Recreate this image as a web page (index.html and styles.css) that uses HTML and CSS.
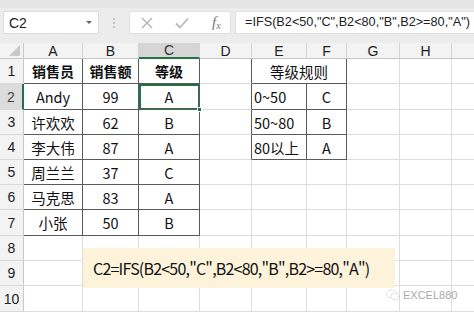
FILE: index.html
```html
<!DOCTYPE html>
<html lang="zh">
<head>
<meta charset="utf-8">
<title>IFS</title>
<link rel="stylesheet" href="styles.css">
</head>
<body>
<div class="app">
  <div class="toolbar">
    <div class="namebox"><span class="nb-text">C2</span><span class="caret"></span></div>
    <div class="grip"><i></i><i></i><i></i></div>
    <div class="fxbox">
      <svg class="ico" width="14" height="14" viewBox="0 0 14 14"><path d="M2 2 L12 12 M12 2 L2 12" stroke="#b9b9b9" stroke-width="1.6" fill="none"/></svg>
      <svg class="ico" width="16" height="14" viewBox="0 0 16 14"><path d="M2 7.5 L6 11.5 L14 2.5" stroke="#b9b9b9" stroke-width="1.8" fill="none"/></svg>
      <span class="fx">f<sub>x</sub></span>
    </div>
    <div class="formula">=IFS(B2&lt;50,"C",B2&lt;80,"B",B2&gt;=80,"A")</div>
  </div>

  <div class="sheet">
    <div class="corner"><span class="tri"></span></div>
    <div class="ch">A</div><div class="ch">B</div><div class="ch sel">C</div><div class="ch">D</div><div class="ch">E</div><div class="ch">F</div><div class="ch">G</div><div class="ch">H</div><div class="ch last"></div>

    <div class="rh">1</div>
    <div class="c dr db b">销售员</div><div class="c dr db b">销售额</div><div class="c dr db b">等级</div><div class="c dr"></div><div class="c dr db span2">等级规则</div><div class="c"></div><div class="c"></div><div class="c last"></div>

    <div class="rh sel">2</div>
    <div class="c dr db">Andy</div><div class="c dr db">99</div><div class="c dr db active">A<span class="handle"></span></div><div class="c dr"></div><div class="c dr db left">0~50</div><div class="c dr db">C</div><div class="c"></div><div class="c"></div><div class="c last"></div>

    <div class="rh">3</div>
    <div class="c dr db">许欢欢</div><div class="c dr db">62</div><div class="c dr db">B</div><div class="c dr"></div><div class="c dr db left">50~80</div><div class="c dr db">B</div><div class="c"></div><div class="c"></div><div class="c last"></div>

    <div class="rh">4</div>
    <div class="c dr db">李大伟</div><div class="c dr db">87</div><div class="c dr db">A</div><div class="c dr"></div><div class="c dr db left">80以上</div><div class="c dr db">A</div><div class="c"></div><div class="c"></div><div class="c last"></div>

    <div class="rh">5</div>
    <div class="c dr db">周兰兰</div><div class="c dr db">37</div><div class="c dr db">C</div><div class="c"></div><div class="c"></div><div class="c"></div><div class="c"></div><div class="c"></div><div class="c last"></div>

    <div class="rh">6</div>
    <div class="c dr db">马克思</div><div class="c dr db">83</div><div class="c dr db">A</div><div class="c"></div><div class="c"></div><div class="c"></div><div class="c"></div><div class="c"></div><div class="c last"></div>

    <div class="rh">7</div>
    <div class="c dr db">小张</div><div class="c dr db">50</div><div class="c dr db">B</div><div class="c"></div><div class="c"></div><div class="c"></div><div class="c"></div><div class="c"></div><div class="c last"></div>

    <div class="rh">8</div>
    <div class="c"></div><div class="c"></div><div class="c"></div><div class="c"></div><div class="c"></div><div class="c"></div><div class="c"></div><div class="c"></div><div class="c last"></div>

    <div class="rh">9</div>
    <div class="c"></div><div class="c"></div><div class="c"></div><div class="c"></div><div class="c"></div><div class="c"></div><div class="c"></div><div class="c"></div><div class="c last"></div>

    <div class="rh">10</div>
    <div class="c"></div><div class="c"></div><div class="c"></div><div class="c"></div><div class="c"></div><div class="c"></div><div class="c"></div><div class="c"></div><div class="c last"></div>

    <div class="note">C2=IFS(B2&lt;50,"C",B2&lt;80,"B",B2&gt;=80,"A")</div>
    <div class="mark">
      <svg width="14" height="12" viewBox="0 0 14 12"><ellipse cx="5.5" cy="5" rx="4.8" ry="4" fill="none" stroke="#c4c4c4" stroke-width="0.9" stroke-dasharray="1.4 1"/><ellipse cx="9" cy="7.5" rx="4" ry="3.3" fill="#fff" stroke="#c4c4c4" stroke-width="0.9" stroke-dasharray="1.4 1"/></svg>
      <span>EXCEL880</span>
    </div>
  </div>
</div>
</body>
</html>
```

FILE: styles.css
```css
* { box-sizing: border-box; }
html, body { margin: 0; padding: 0; }
body {
  width: 474px;
  height: 312px;
  overflow: hidden;
  background: #ffffff;
  font-family: "Liberation Sans", Arial, sans-serif;
}
.app { width: 474px; height: 312px; overflow: hidden; }

.toolbar {
  height: 43px;
  background: #ececec;
  border-top: 8px solid #e4e4e4;
  padding-top: 3px;
  display: flex;
  align-items: flex-start;
  white-space: nowrap;
}
.namebox {
  margin-left: 3px;
  width: 96px;
  height: 23px;
  background: #fff;
  border: 1px solid #dcdcdc;
  display: flex;
  align-items: center;
  justify-content: space-between;
  padding: 0 6px 0 5px;
  font-size: 14px;
  color: #222;
}
.caret {
  width: 0; height: 0;
  border-left: 3px solid transparent;
  border-right: 3px solid transparent;
  border-top: 3px solid #666;
}
.grip {
  width: 30px;
  height: 23px;
  display: flex;
  flex-direction: column;
  align-items: center;
  justify-content: center;
  gap: 2px;
}
.grip i { display: block; width: 2px; height: 2px; background: #b5b5b5; border-radius: 1px; }
.fxbox {
  width: 102px;
  height: 23px;
  background: #fff;
  border: 1px solid #e0e0e0;
  display: flex;
  align-items: center;
  padding-left: 10px;
  gap: 20px;
}
.fx {
  font-family: "Liberation Serif", serif;
  font-style: italic;
  font-size: 15px;
  color: #777;
  line-height: 1;
  margin-left: 2px;
}
.fx sub { font-size: 10px; vertical-align: -2px; }
.formula {
  margin-left: 4px;
  flex: 1;
  height: 23px;
  background: #fff;
  border: 1px solid #e0e0e0;
  border-right: none;
  padding-left: 9px;
  font-size: 12.7px;
  line-height: 21px;
  color: #222;
}

.sheet {
  position: relative;
  display: grid;
  grid-template-columns: 24px 59px 56px 61px 52px 55px 40px 53px 52px 22px;
  grid-template-rows: 16px 25px 26px 25px 25px 25px 25px 26px 25px 25px 26px;
  font-family: "Noto Sans CJK SC", sans-serif;
}
.corner {
  background: #f3f3f3;
  border-right: 1px solid #c8c8c8;
  border-bottom: 1px solid #c8c8c8;
  position: relative;
}
.tri {
  position: absolute;
  right: 3px; bottom: 2px;
  width: 0; height: 0;
  border-left: 11px solid transparent;
  border-bottom: 11px solid #c9c9c9;
}
.ch {
  background: #f3f3f3;
  border-right: 1px solid #d4d4d4;
  border-bottom: 1px solid #c8c8c8;
  font-family: "Liberation Sans", Arial, sans-serif;
  font-size: 14px;
  color: #222;
  display: flex;
  align-items: center;
  justify-content: center;
  line-height: 1;
}
.ch.sel {
  background: #d5d5d5;
  border-bottom: 2px solid #217346;
  color: #333;
}
.ch.last { border-right: none; }
.rh {
  background: #f3f3f3;
  border-right: 1px solid #c8c8c8;
  border-bottom: 1px solid #dadada;
  font-family: "Liberation Sans", Arial, sans-serif;
  font-size: 14px;
  color: #222;
  display: flex;
  align-items: center;
  justify-content: center;
}
.rh.sel {
  background: #dcdcdc;
  border-right: 2px solid #217346;
  color: #444;
}
.c {
  border-right: 1px solid #dcdcdc;
  border-bottom: 1px solid #dcdcdc;
  font-size: 14.5px;
  color: #111;
  display: flex;
  align-items: center;
  justify-content: center;
  white-space: nowrap;
  position: relative;
}
.c.last { border-right: none; }
.c.dr { border-right-color: #5a5a5a; }
.c.db { border-bottom-color: #5a5a5a; }
.c.b { font-weight: 700; font-size: 14px; }
.c.left { justify-content: flex-start; padding-left: 2px; }
.span2 { grid-column: span 2; }
.c.active { box-shadow: inset 0 0 0 1px #217346, inset 1px 1px 0 1px #217346; }
.handle {
  position: absolute;
  right: -3px; bottom: -3px;
  width: 5px; height: 5px;
  background: #217346;
  border: 1px solid #fff;
  z-index: 2;
}

.note {
  position: absolute;
  left: 83px;
  top: 205px;
  width: 312px;
  height: 40px;
  background: #fdf3da;
  padding-left: 10px;
  font-size: 16px;
  letter-spacing: -0.8px;
  line-height: 40px;
  color: #111;
  white-space: nowrap;
}
.mark {
  position: absolute;
  left: 386px;
  top: 246px;
  display: flex;
  align-items: center;
  gap: 3px;
  font-family: "Liberation Sans", Arial, sans-serif;
  font-size: 11px;
  color: #a9a9a9;
}
```
